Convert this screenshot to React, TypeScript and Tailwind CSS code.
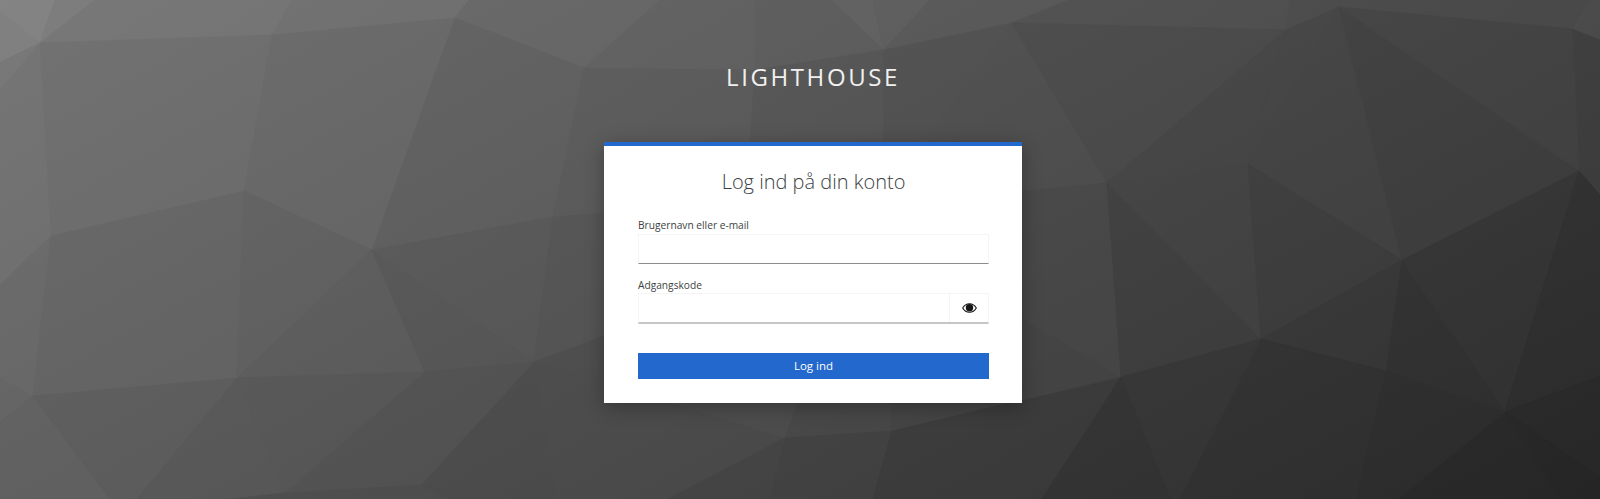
const polys: [string, string][] = [
  ["0,0 55,0 40,43 0,12", "#848484"],
  ["55,0 95,0 40,43", "#7c7c7c"],
  ["95,0 292,0 272,35 40,43", "#747474"],
  ["292,0 469,0 455,18 272,35", "#6f6f6f"],
  ["469,0 660,0 584,68 455,18", "#656565"],
  ["0,12 40,43 0,62", "#808080"],
  ["0,62 40,43 0,90", "#757575"],
  ["0,90 40,43 51,236 0,195", "#707070"],
  ["40,43 272,35 244,191 51,236", "#6b6b6b"],
  ["272,35 455,18 372,250 244,191", "#666666"],
  ["455,18 584,68 553,217 372,250", "#5d5d5d"],
  ["584,68 660,0 755,0 755,70", "#5f5f5f"],
  ["755,0 832,0 884,50 755,70", "#5b5b5b"],
  ["832,0 873,0 884,50", "#626262"],
  ["873,0 930,0 884,50", "#5e5e5e"],
  ["930,0 1069,0 1012,23 884,50", "#575757"],
  ["1069,0 1290,0 1286,30 1012,23", "#4e4e4e"],
  ["1290,0 1340,0 1339,7 1286,30", "#4a4a4a"],
  ["1340,0 1588,0 1572,29 1339,7", "#494949"],
  ["1588,0 1600,0 1600,40 1572,29", "#4c4c4c"],
  ["1572,29 1600,40 1600,195 1579,171", "#3c3c3c"],
  ["584,68 755,70 745,210 553,217", "#585858"],
  ["755,70 884,50 884,210 745,210", "#525252"],
  ["884,50 1012,23 925,140 884,210", "#4d4d4d"],
  ["1012,23 1107,183 1022,191 925,140", "#4c4c4c"],
  ["1012,23 1286,30 1107,183", "#474747"],
  ["1286,30 1248,164 1107,183", "#424242"],
  ["1286,30 1339,7 1248,164", "#424242"],
  ["1339,7 1402,260 1248,164", "#414141"],
  ["1339,7 1579,171 1402,260", "#3c3c3c"],
  ["1339,7 1572,29 1579,171", "#414141"],
  ["0,195 51,236 36,250 0,285", "#707070"],
  ["0,285 36,250 51,236 33,396 0,378", "#686868"],
  ["0,378 33,396 0,422", "#646464"],
  ["0,422 33,396 110,499 0,499", "#606060"],
  ["51,236 244,191 237,378 33,396", "#636363"],
  ["244,191 372,250 237,378", "#5f5f5f"],
  ["372,250 425,372 237,378", "#5b5b5b"],
  ["372,250 553,217 534,362", "#565656"],
  ["372,250 534,362 425,372", "#545454"],
  ["553,217 700,205 700,300 534,362", "#525252"],
  ["534,362 700,300 700,400", "#4a4a4a"],
  ["534,362 555,499 450,499 421,485", "#484848"],
  ["534,362 700,400 668,499 555,499", "#494949"],
  ["33,396 237,378 137,499 110,499", "#5b5b5b"],
  ["237,378 285,493 230,499 137,499", "#565656"],
  ["237,378 425,372 285,493", "#555555"],
  ["425,372 534,362 421,485 285,493", "#505050"],
  ["285,493 421,485 450,499 230,499", "#4a4a4a"],
  ["604,403 672,403 785,438 668,499 604,499", "#494949"],
  ["672,403 798,403 785,438", "#4d4d4d"],
  ["798,403 892,403 892,431 785,438", "#474747"],
  ["785,438 892,431 873,499 770,499", "#3f3f3f"],
  ["785,438 770,499 668,499", "#424242"],
  ["892,403 1022,400 892,431", "#444444"],
  ["892,431 1022,400 1121,377 1042,499 873,499", "#383838"],
  ["1022,318 1121,377 1022,400", "#434343"],
  ["1022,191 1107,183 1121,377 1022,318", "#464646"],
  ["1107,183 1261,339 1121,377", "#3c3c3c"],
  ["1107,183 1248,164 1261,339", "#414141"],
  ["1248,164 1402,260 1261,339", "#3b3b3b"],
  ["1402,260 1386,371 1261,339", "#353535"],
  ["1402,260 1505,412 1386,371", "#2e2e2e"],
  ["1402,260 1579,171 1505,412", "#323232"],
  ["1579,171 1600,195 1600,376 1505,412", "#2c2c2c"],
  ["1505,412 1600,376 1600,477", "#272727"],
  ["1505,412 1600,477 1600,499 1560,499", "#242424"],
  ["1505,412 1560,499 1398,499", "#262626"],
  ["1386,371 1505,412 1398,499 1356,499", "#2b2b2b"],
  ["1261,339 1386,371 1356,499 1180,499", "#2e2e2e"],
  ["1121,377 1261,339 1180,499 1170,499", "#333333"],
  ["1121,377 1170,499 1042,499", "#2f2f2f"],
];

export default function App() {
  return (
    <div className="relative h-[499px] w-full overflow-hidden bg-[#444444] font-['Open_Sans',sans-serif]">
      <svg className="absolute inset-0 h-[499px] w-[1600px]" viewBox="0 0 1600 499" aria-hidden="true">
        <defs>
          <linearGradient id="bg" gradientUnits="userSpaceOnUse" x1="0" y1="0" x2="675" y2="1215">
            <stop offset="0" stopColor="#848484" />
            <stop offset="1" stopColor="#1c1c1c" />
          </linearGradient>
        </defs>
        <rect width="1600" height="499" fill="url(#bg)" />
        <g opacity="0.68">
          {polys.map(([points, fill], i) => (
            <polygon key={i} points={points} fill={fill} stroke={fill} strokeWidth="0.6" />
          ))}
        </g>
      </svg>
      <main className="relative flex flex-col items-center pt-[60px] pl-[26px]">
        <h1 className="text-[24px] leading-[33px] font-normal tracking-[2.6px] text-[#f0f0f0]">LIGHTHOUSE</h1>
        <section className="mt-[49px] h-[261px] w-[418px] border-t-4 border-[#2368cc] bg-white pr-[33px] pl-[34px] shadow-[0_4px_18px_rgba(0,0,0,0.3)]">
          <h2 className="mt-[21px] text-center text-[20px] leading-[30px] font-light text-[#3c3f42]">Log ind på din konto</h2>
          <form className="mt-[21px] flex flex-col">
            <label className="text-[10.2px] leading-[14px] text-[#3c3f42]">Brugernavn eller e-mail</label>
            <div className="mt-[2px] h-[30px] border border-[#f5f5f5] border-b-[#8a8d90]" />
            <label className="mt-[14px] text-[10.2px] leading-[14px] text-[#3c3f42]">Adgangskode</label>
            <div className="mt-[1px] flex h-[31px] border border-[#f5f5f5] border-b-2 border-b-[#c4c6c8]">
              <div className="flex-1" />
              <div className="flex w-[39px] items-center justify-center border-l border-[#f5f5f5]">
                <svg className="h-[10px] w-[15px]" viewBox="0 0 15 10" aria-hidden="true">
                  <path d="M0.7 5 C2.4 2 4.7 0.7 7.5 0.7 S12.6 2 14.3 5 C12.6 8 10.3 9.3 7.5 9.3 S2.4 8 0.7 5 Z" fill="#ffffff" stroke="#151515" strokeWidth="1.1" />
                  <circle cx="7.5" cy="4.8" r="3.7" fill="#151515" />
                </svg>
              </div>
            </div>
            <button type="button" className="mt-[29px] h-[26px] w-full bg-[#2368cc] text-[11.5px] leading-[26px] text-white">Log ind</button>
          </form>
        </section>
      </main>
    </div>
  );
}
